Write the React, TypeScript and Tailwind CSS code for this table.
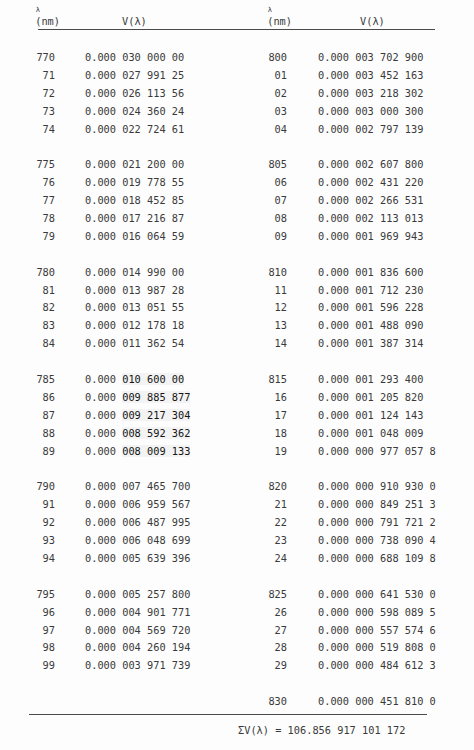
import React from 'react';

const LEFT: [string, string][][] = [
  [['770', '0.000 030 000 00'], ['71', '0.000 027 991 25'], ['72', '0.000 026 113 56'], ['73', '0.000 024 360 24'], ['74', '0.000 022 724 61']],
  [['775', '0.000 021 200 00'], ['76', '0.000 019 778 55'], ['77', '0.000 018 452 85'], ['78', '0.000 017 216 87'], ['79', '0.000 016 064 59']],
  [['780', '0.000 014 990 00'], ['81', '0.000 013 987 28'], ['82', '0.000 013 051 55'], ['83', '0.000 012 178 18'], ['84', '0.000 011 362 54']],
  [['785', '0.000 010 600 00'], ['86', '0.000 009 885 877'], ['87', '0.000 009 217 304'], ['88', '0.000 008 592 362'], ['89', '0.000 008 009 133']],
  [['790', '0.000 007 465 700'], ['91', '0.000 006 959 567'], ['92', '0.000 006 487 995'], ['93', '0.000 006 048 699'], ['94', '0.000 005 639 396']],
  [['795', '0.000 005 257 800'], ['96', '0.000 004 901 771'], ['97', '0.000 004 569 720'], ['98', '0.000 004 260 194'], ['99', '0.000 003 971 739']],
];

const RIGHT: [string, string][][] = [
  [['800', '0.000 003 702 900'], ['01', '0.000 003 452 163'], ['02', '0.000 003 218 302'], ['03', '0.000 003 000 300'], ['04', '0.000 002 797 139']],
  [['805', '0.000 002 607 800'], ['06', '0.000 002 431 220'], ['07', '0.000 002 266 531'], ['08', '0.000 002 113 013'], ['09', '0.000 001 969 943']],
  [['810', '0.000 001 836 600'], ['11', '0.000 001 712 230'], ['12', '0.000 001 596 228'], ['13', '0.000 001 488 090'], ['14', '0.000 001 387 314']],
  [['815', '0.000 001 293 400'], ['16', '0.000 001 205 820'], ['17', '0.000 001 124 143'], ['18', '0.000 001 048 009'], ['19', '0.000 000 977 057 8']],
  [['820', '0.000 000 910 930 0'], ['21', '0.000 000 849 251 3'], ['22', '0.000 000 791 721 2'], ['23', '0.000 000 738 090 4'], ['24', '0.000 000 688 109 8']],
  [['825', '0.000 000 641 530 0'], ['26', '0.000 000 598 089 5'], ['27', '0.000 000 557 574 6'], ['28', '0.000 000 519 808 0'], ['29', '0.000 000 484 612 3']],
];

const Row = ({ l, r, dark }: { l?: [string, string]; r?: [string, string]; dark?: boolean }) => (
  <div className="flex h-[17.9px] items-center leading-[17.9px] whitespace-pre">
    <span className="w-[85px] pr-[30px] text-right">{l?.[0] ?? ''}</span>
    <span className="w-[172px]">
      {l && dark ? (
        <>
          {l[1].slice(0, 6)}
          <span className="bg-[#f3f3f3] text-[#151515]">{l[1].slice(6)}</span>
        </>
      ) : (
        l?.[1] ?? ''
      )}
    </span>
    <span className="w-[61px] pr-[31px] text-right">{r?.[0] ?? ''}</span>
    <span className="flex-1">{r?.[1] ?? ''}</span>
  </div>
);

export default function App() {
  return (
    <div className="h-[750px] w-[474px] overflow-hidden bg-[#fdfdfd] font-['DejaVu_Sans_Mono',monospace] text-[10.3px] text-[#3a3a3a]">
      {/* header */}
      <div className="flex pt-[6px] text-[7px] leading-[8px]">
        <span className="w-[40px] text-right">λ</span>
        <span className="w-[232px] text-right">λ</span>
      </div>
      <div className="flex h-[14px] items-center leading-[14px]">
        <span className="w-[85px] pr-[25px] text-right">(nm)</span>
        <span className="w-[172px] pl-[37px]">V(λ)</span>
        <span className="w-[61px] pr-[26px] text-right">(nm)</span>
        <span className="flex-1 pl-[42px]">V(λ)</span>
      </div>
      <div className="ml-[38px] mt-[1px] h-px w-[397px] bg-[#4a4a4a]" />

      <div className="mt-[19px] flex flex-col">
        {LEFT.map((group, g) => (
          <React.Fragment key={g}>
            {g > 0 && <Row />}
            {group.map((row, i) => (
              <Row key={i} l={row} r={RIGHT[g][i]} dark={g === 3} />
            ))}
          </React.Fragment>
        ))}
        <Row />
        <Row r={['830', '0.000 000 451 810 0']} />
      </div>

      <div className="ml-[29px] mt-[3.5px] h-px w-[398px] bg-[#4a4a4a]" />
      <div className="ml-[238px] mt-[9px] leading-[12px] whitespace-pre">ΣV(λ) = 106.856 917 101 172</div>
    </div>
  );
}
